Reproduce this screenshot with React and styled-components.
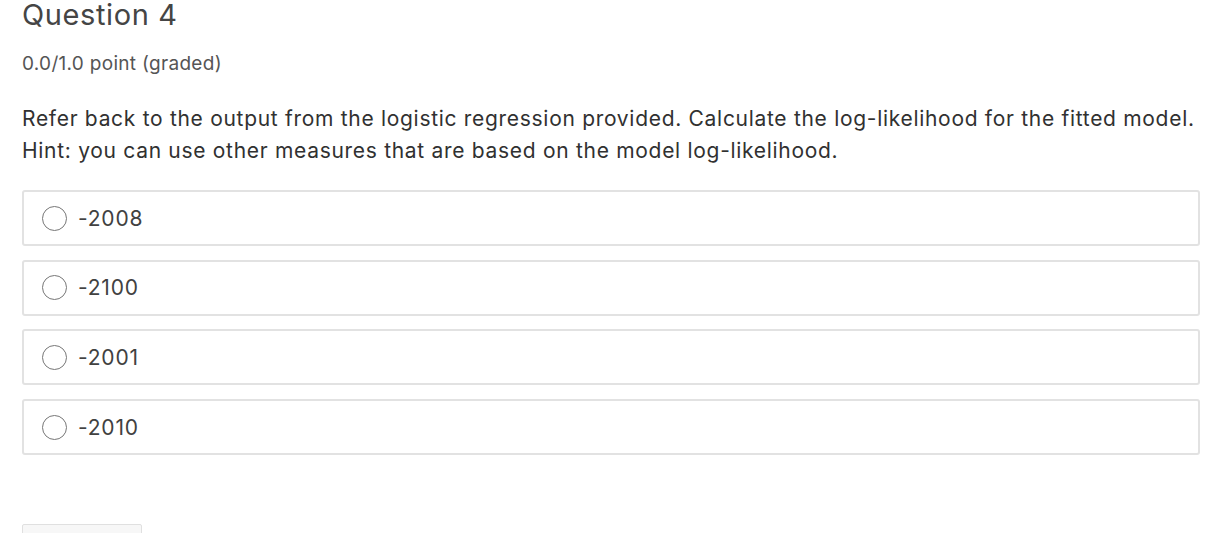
import React from "react";
import styled, { createGlobalStyle } from "styled-components";

const GlobalStyle = createGlobalStyle`
  html, body {
    margin: 0;
    padding: 0;
    background: #ffffff;
  }
  body {
    font-family: Inter, "Open Sans", "Liberation Sans", sans-serif;
    color: #414141;
  }
`;

const Page = styled.div`
  padding: 0 20px 0 22px;
  height: 533px;
  overflow: hidden;
  box-sizing: border-box;
`;

const Title = styled.h3`
  margin: 0;
  font-size: 29px;
  font-weight: 400;
  line-height: 30px;
  letter-spacing: 0.6px;
  color: #454545;
`;

const Points = styled.div`
  margin-top: 20px;
  font-size: 19px;
  line-height: 28px;
  letter-spacing: 0.3px;
  color: #555555;
`;

const Prompt = styled.p`
  margin: 25px 0 0;
  font-size: 21px;
  line-height: 32px;
  letter-spacing: 0.7px;
  color: #313131;
`;

const Choices = styled.div`
  margin-top: 23px;
  display: flex;
  flex-direction: column;
  gap: 13.7px;
`;

const Choice = styled.label`
  display: flex;
  align-items: center;
  gap: 11px;
  height: 56px;
  padding: 0 18px;
  box-sizing: border-box;
  border: 2px solid #e2e2e2;
  border-radius: 3px;
  cursor: pointer;
`;

const Radio = styled.span`
  width: 23px;
  height: 23px;
  border: 1.5px solid #767676;
  border-radius: 50%;
  box-sizing: content-box;
  flex-shrink: 0;
`;

const ChoiceText = styled.span`
  font-size: 21px;
  letter-spacing: 0.8px;
  color: #414141;
`;

const SubmitButton = styled.div`
  margin-top: 69px;
  width: 118px;
  height: 40px;
  background: #f7f7f7;
  border: 1px solid #e0e0e0;
  border-radius: 2px;
`;

const options = ["-2008", "-2100", "-2001", "-2010"];

export default function App() {
  return (
    <>
      <GlobalStyle />
      <Page>
        <Title>Question 4</Title>
        <Points>0.0/1.0 point (graded)</Points>
        <Prompt>
          Refer back to the output from the logistic regression provided. Calculate the
          log-likelihood for the fitted model.
          <br />
          Hint: you can use other measures that are based on the model log-likelihood.
        </Prompt>
        <Choices>
          {options.map((o) => (
            <Choice key={o}>
              <Radio />
              <ChoiceText>{o}</ChoiceText>
            </Choice>
          ))}
        </Choices>
        <SubmitButton />
      </Page>
    </>
  );
}
